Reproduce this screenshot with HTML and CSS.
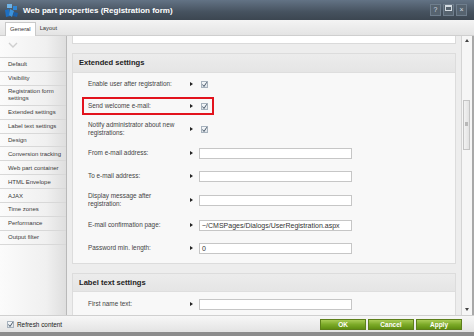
FILE: index.html
```html
<!DOCTYPE html>
<html lang="en">
<head>
    <meta charset="UTF-8">
    <title>Web part properties</title>
    <link rel="stylesheet" href="styles.css">
</head>
<body>
<div class="window">
    <div class="titlebar">
        <svg class="logo" width="15" height="15" viewBox="0 0 15 15">
            <path d="M3 1 L8 1 L8 5 L3 5 Z" fill="#6fb2e6"/>
            <path d="M9 3 L13 3 L13 7 L9 7 Z" fill="#2f86d4"/>
            <path d="M1 7 L5 6 L6 13 L2 14 Z" fill="#1d6fc2"/>
            <path d="M6 6 L10 8 L8 14 L5 12 Z" fill="#3c93dc"/>
            <path d="M10 9 L14 10 L13 14 L9 13 Z" fill="#1a5ea8"/>
        </svg>
        <span class="title">Web part properties (Registration form)</span>
        <div class="win-buttons">
            <span class="win-btn">?</span>
            <span class="win-btn"><span class="max"></span></span>
            <span class="win-btn">&#215;</span>
        </div>
    </div>
    <div class="tabs">
        <span class="tab active">General</span>
        <span class="tab">Layout</span>
    </div>
    <div class="main">
        <div class="nav">
            <div class="nav-top">
                <svg width="10" height="6" viewBox="0 0 10 6"><path d="M1 1 L5 5 L9 1" fill="none" stroke="#cfcfcf" stroke-width="1.4"/></svg>
            </div>
            <div class="nav-item">Default</div>
            <div class="nav-item">Visibility</div>
            <div class="nav-item double">Registration form settings</div>
            <div class="nav-item">Extended settings</div>
            <div class="nav-item">Label text settings</div>
            <div class="nav-item">Design</div>
            <div class="nav-item">Conversion tracking</div>
            <div class="nav-item">Web part container</div>
            <div class="nav-item">HTML Envelope</div>
            <div class="nav-item">AJAX</div>
            <div class="nav-item">Time zones</div>
            <div class="nav-item">Performance</div>
            <div class="nav-item">Output filter</div>
        </div>
        <div class="content">
            <div class="prev-box"></div>

            <div class="section">
                <div class="section-head">Extended settings</div>
                <div class="section-body">
                    <div class="row h22">
                        <span class="label">Enable user after registration:</span>
                        <span class="arrow"></span>
                        <span class="check"><svg width="7" height="7" viewBox="0 0 7 7"><path d="M1.5 3.5 L3 5.5 L5.8 1.2" fill="none" stroke="#4a5a6a" stroke-width="1"/></svg></span>
                    </div>
                    <div class="row h22">
                        <span class="hl">
                            <span class="label">Send welcome e-mail:</span>
                            <span class="arrow"></span>
                            <span class="check"><svg width="7" height="7" viewBox="0 0 7 7"><path d="M1.5 3.5 L3 5.5 L5.8 1.2" fill="none" stroke="#4a5a6a" stroke-width="1"/></svg></span>
                        </span>
                    </div>
                    <div class="row h24">
                        <span class="label">Notify administrator about new registrations:</span>
                        <span class="arrow"></span>
                        <span class="check"><svg width="7" height="7" viewBox="0 0 7 7"><path d="M1.5 3.5 L3 5.5 L5.8 1.2" fill="none" stroke="#4a5a6a" stroke-width="1"/></svg></span>
                    </div>
                    <div class="row h24">
                        <span class="label">From e-mail address:</span>
                        <span class="arrow"></span>
                        <span class="input"></span>
                    </div>
                    <div class="row h22">
                        <span class="label">To e-mail address:</span>
                        <span class="arrow"></span>
                        <span class="input"></span>
                    </div>
                    <div class="row h26">
                        <span class="label">Display message after registration:</span>
                        <span class="arrow"></span>
                        <span class="input"></span>
                    </div>
                    <div class="row h24">
                        <span class="label">E-mail confirmation page:</span>
                        <span class="arrow"></span>
                        <span class="input">~/CMSPages/Dialogs/UserRegistration.aspx</span>
                    </div>
                    <div class="row h22">
                        <span class="label">Password min. length:</span>
                        <span class="arrow"></span>
                        <span class="input">0</span>
                    </div>
                </div>
            </div>

            <div class="section">
                <div class="section-head short">Label text settings</div>
                <div class="section-body">
                    <div class="row h24">
                        <span class="label">First name text:</span>
                        <span class="arrow"></span>
                        <span class="input"></span>
                    </div>
                </div>
            </div>
        </div>
        <div class="scrollbar">
            <span class="sb-up"></span>
            <span class="sb-thumb"><span class="grip"></span></span>
            <span class="sb-down"></span>
        </div>
    </div>
    <div class="footer">
        <label class="refresh">
            <span class="check"><svg width="7" height="7" viewBox="0 0 7 7"><path d="M1.5 3.5 L3 5.5 L5.8 1.2" fill="none" stroke="#4a5a6a" stroke-width="1"/></svg></span>
            Refresh content
        </label>
        <div class="actions">
            <button class="btn">OK</button>
            <button class="btn">Cancel</button>
            <button class="btn">Apply</button>
        </div>
    </div>
</div>
</body>
</html>
```

FILE: styles.css
```css
body {
    margin: 0;
    padding: 0;
    font-family: Arial, "Liberation Sans", sans-serif;
    background-color: #7d8287;
}
.window {
    width: 474px;
    height: 336px;
    display: flex;
    flex-direction: column;
    overflow: hidden;
    background-color: #ececec;
}
.titlebar {
    height: 20px;
    display: flex;
    align-items: center;
    background: linear-gradient(#637385, #46525f 60%, #3c4651);
    color: white;
    padding-left: 4px;
}
.logo {
    margin-right: 4px;
}
.title {
    font-weight: bold;
    font-size: 8px;
}
.win-buttons {
    margin-left: auto;
    display: flex;
    gap: 2px;
    margin-right: 7px;
}
.win-btn {
    width: 9px;
    height: 10px;
    border: 1px solid #6f7e8d;
    background-color: #56636f;
    color: #d4dbe2;
    font-size: 7px;
    line-height: 10px;
    text-align: center;
}
.max {
    display: inline-block;
    width: 5px;
    height: 3px;
    border: 1px solid #d4dbe2;
    border-top-width: 2px;
    vertical-align: 1px;
}
.tabs {
    height: 16px;
    box-sizing: border-box;
    background: linear-gradient(#f4f4f4, #e4e4e4);
    border-bottom: 1px solid #cfcfcf;
    display: flex;
    align-items: flex-end;
    padding-left: 5px;
}
.tab {
    font-size: 5.8px;
    color: #333;
    padding: 0 4px;
    height: 13px;
    line-height: 12px;
}
.tab.active {
    background-color: white;
    border: 1px solid #c9c9c9;
    border-bottom: none;
    margin-bottom: -1px;
}
.main {
    flex: 1;
    display: flex;
    min-height: 0;
    border-right: 2px solid #a8a8a8;
}
.nav {
    width: 66px;
    flex-shrink: 0;
    background: linear-gradient(to right, #fbfbfb, #f0f0f0 70%, #dedede);
    border-right: 1px solid #b9b9b9;
}
.nav-top {
    height: 22px;
    border-bottom: 1px solid #d8d8d8;
    padding-left: 8px;
    padding-top: 6px;
    box-sizing: border-box;
}
.nav-top svg {
    display: block;
}
.nav-item {
    height: 12.9px;
    border-bottom: 1px solid #d8d8d8;
    font-size: 6px;
    color: #3a3a3a;
    padding-left: 8px;
    display: flex;
    align-items: center;
}
.nav-item.double {
    height: 19px;
    line-height: 7.5px;
}
.content {
    flex: 1;
    min-width: 0;
    padding: 0 5px;
    background-color: #ededed;
    overflow: hidden;
}
.prev-box {
    height: 7px;
    background-color: white;
    border: 1px solid #dadada;
    border-top: none;
    margin-bottom: 9px;
}
.section {
    background-color: #f8f8f8;
    border: 1px solid #dcdcdc;
    margin-bottom: 9px;
}
.section-head {
    height: 18px;
    line-height: 18px;
    background: linear-gradient(#ececec, #e5e5e5);
    border-bottom: 1px solid #dedede;
    font-weight: bold;
    font-size: 7.6px;
    color: #222;
    padding-left: 6px;
}
.section-head.short {
    height: 17px;
    line-height: 17px;
}
.section-body {
    padding-bottom: 4px;
}
.row {
    display: flex;
    align-items: center;
    padding-left: 15px;
    font-size: 6.4px;
    color: #444;
}
.h22 {
    height: 22px;
}
.h24 {
    height: 24px;
}
.h26 {
    height: 26px;
}
.label {
    width: 92px;
    margin-right: 10px;
    line-height: 8.5px;
    flex-shrink: 0;
}
.arrow {
    width: 0;
    height: 0;
    border-left: 3px solid #222;
    border-top: 2px solid transparent;
    border-bottom: 2px solid transparent;
    margin-right: 6px;
}
.check {
    width: 7px;
    height: 7px;
    border: 1px solid #a7b2bd;
    background: linear-gradient(#f6f8fa, #dfe4e9);
    display: inline-block;
    box-sizing: border-box;
    position: relative;
}
.row .check {
    margin-left: 2px;
}
.check svg {
    position: absolute;
    left: -1px;
    top: -1px;
}
.hl {
    display: flex;
    align-items: center;
    border: 2px solid #e2131d;
    padding: 3px 4px 3px 4px;
    margin: -5px -6px -5px -6px;
}
.input {
    width: 153px;
    height: 11px;
    box-sizing: border-box;
    background-color: white;
    border: 1px solid #c6c6c6;
    font-size: 7px;
    line-height: 9px;
    padding-left: 2px;
    color: #333;
    white-space: nowrap;
}
.scrollbar {
    width: 10px;
    flex-shrink: 0;
    background-color: #f6f6f6;
    border-left: 1px solid #d4d4d4;
    position: relative;
}
.sb-up {
    position: absolute;
    left: 3px;
    top: 3px;
    border-bottom: 3px solid #444;
    border-left: 2px solid transparent;
    border-right: 2px solid transparent;
}
.sb-down {
    position: absolute;
    left: 3px;
    bottom: 4px;
    border-top: 3px solid #444;
    border-left: 2px solid transparent;
    border-right: 2px solid transparent;
}
.sb-thumb {
    position: absolute;
    left: 1px;
    top: 64px;
    width: 7px;
    height: 50px;
    box-sizing: border-box;
    border: 1px solid #c4c4c4;
    background: linear-gradient(to right, #f2f2f2, #e2e2e2);
}
.grip {
    position: absolute;
    left: 1px;
    top: 21px;
    width: 3px;
    height: 4px;
    background-color: #b8b8b8;
}
.footer {
    height: 16px;
    border-top: 1px solid #d0d0d0;
    border-bottom: 4px solid #8c8c8c;
    background: linear-gradient(#f7f7f7, #e3e3e3);
    display: flex;
    align-items: center;
    padding: 0 12px 0 7px;
}
.refresh {
    display: flex;
    align-items: center;
    gap: 3px;
    font-size: 6.4px;
    color: #222;
}
.actions {
    margin-left: auto;
    display: flex;
    gap: 2px;
}
.btn {
    width: 46px;
    height: 11px;
    padding: 0;
    border: 1px solid #5d7f1a;
    background: linear-gradient(#a9cc55, #7caa28 50%, #5f8e12);
    color: white;
    font-weight: bold;
    font-size: 6.5px;
    font-family: Arial, "Liberation Sans", sans-serif;
    line-height: 9px;
}
```
